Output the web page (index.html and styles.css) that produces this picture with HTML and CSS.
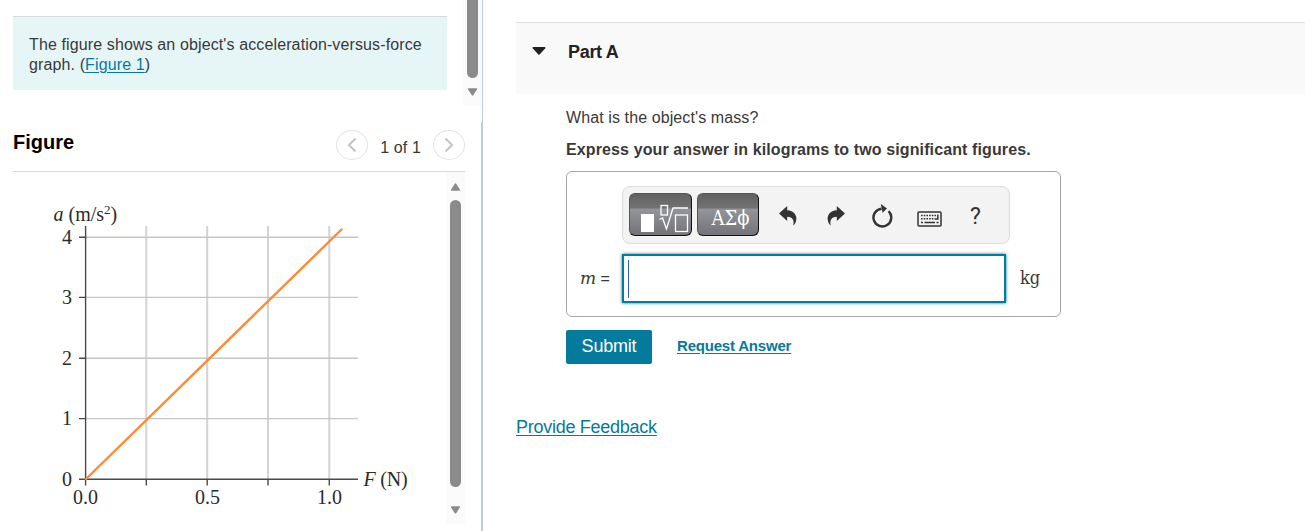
FILE: index.html
```
<!DOCTYPE html>
<html lang="en">
<head>
  <meta charset="UTF-8" />
  <title>Part A</title>
  <link rel="stylesheet" href="styles.css">
</head>

<body>
  <div class="left-pane">
    <div class="intro-row">
      <div class="intro">The figure shows an object's acceleration-versus-force graph. (<a href="#">Figure 1</a>)</div>
      <div class="scrollbar scrollbar-top">
        <div class="thumb"></div>
        <svg class="arrow" viewBox="0 0 12 10"><path d="M1.500 1h9q1 0 .4 1L6.800 8.500q-.8 1-1.600 0L1.100 2q-.6-1 .4-1z" /></svg>
      </div>
    </div>

    <div class="figure-pane">
      <div class="figure-header">
        <h2>Figure</h2>
        <div class="pager">
          <button class="page-btn" aria-label="Previous"><svg viewBox="0 0 12 16"><path d="M9.500 1.500L3 8l6.500 6.500" /></svg></button>
          <span>1 of 1</span>
          <button class="page-btn" aria-label="Next"><svg viewBox="0 0 12 16"><path d="M2.500 1.500L9 8l-6.500 6.500" /></svg></button>
        </div>
      </div>

      <div class="figure-body">
        <svg class="graph" viewBox="13 172 433 352">
          <!-- grid -->
          <path class="grid-v" d="M146.3 226v253M207.2 226v253M268 226v253M329.3 226v253" />
          <path class="grid-h" d="M86 237.2h272M86 297.4h272M86 358.2h272M86 418.6h272" />
          <!-- axes and ticks -->
          <path class="axis" d="M85.6 226v259.5M79 479.3h279" />
          <path class="axis" d="M79 237.2h7M79 297.4h7M79 358.2h7M79 418.6h7" />
          <path class="axis" d="M146.3 479v6.5M207.2 479v6.5M268 479v6.5M329.3 479v6.5" />
          <path class="curve" d="M86 479L341.500 229.500" />
          <text x="53.500" y="220.500"><tspan class="var">a</tspan> (m/s<tspan class="sup" dy="-7">2</tspan><tspan dy="7">)</tspan></text>
          <text x="62" y="243.500">4</text>
          <text x="62" y="304">3</text>
          <text x="62" y="364.500">2</text>
          <text x="62" y="425">1</text>
          <text x="62" y="485.500">0</text>
          <text x="73" y="503.500">0.0</text>
          <text x="195" y="503.500">0.5</text>
          <text x="317" y="503.500">1.0</text>
          <text class="x-label" x="363.500" y="485.500"><tspan class="var">F</tspan> (N)</text>
        </svg>
        <div class="scrollbar scrollbar-figure">
          <svg class="arrow up" viewBox="0 0 12 10"><path d="M1.500 1h9q1 0 .4 1L6.800 8.500q-.8 1-1.600 0L1.100 2q-.6-1 .4-1z" /></svg>
          <div class="thumb"></div>
          <svg class="arrow" viewBox="0 0 12 10"><path d="M1.500 1h9q1 0 .4 1L6.800 8.500q-.8 1-1.600 0L1.100 2q-.6-1 .4-1z" /></svg>
        </div>
      </div>
    </div>
  </div>

  <div class="right-pane">
    <div class="part-header">
      <svg class="caret" viewBox="0 0 14 8"><path d="M1.200 0h11.600q1.200.3.500 1.200L7.600 7.400q-.6.6-1.200 0L.7 1.200Q0 .3 1.200 0z" /></svg>
      <h1>Part A</h1>
    </div>

    <div class="part-body">
      <p class="question">What is the object's mass?</p>
      <p class="instruction">Express your answer in kilograms to two significant figures.</p>

      <div class="answer-box">
        <div class="toolbar">
          <button class="tool-dark tool-math" aria-label="Templates">
            <svg viewBox="0 0 61 41">
              <rect class="solid" x="11" y="20" width="13" height="18" />
              <path d="M29.500 25.500l3-1.500 4 11L43 14H58" />
              <rect x="31" y="11.500" width="6.500" height="9.500" />
              <rect x="45.500" y="21" width="12" height="16.500" />
            </svg>
          </button>
          <button class="tool-dark tool-greek">ΑΣϕ</button>
          <button class="tool tool-undo" aria-label="Undo">
            <svg viewBox="0 0 18 20"><path d="M0 7.500L8.200 0v4.300C15 4.800 18 9.500 17.300 13.500 17 16.500 15.800 18.400 14.200 19.500 15.500 14.500 14 11 8.200 10.700V15z" /></svg>
          </button>
          <button class="tool tool-redo" aria-label="Redo">
            <svg viewBox="0 0 18 20"><path d="M18 7.500L9.800 0v4.300C3 4.800 0 9.500.7 13.500 1 16.500 2.200 18.400 3.800 19.500 2.500 14.500 4 11 9.800 10.700V15z" /></svg>
          </button>
          <button class="tool tool-reset" aria-label="Reset">
            <svg viewBox="0 0 22 24"><path class="ring" d="M17.600 7.200A8.900 8.900 0 1 1 10.500 4.700" /><path d="M9.800 0l6.200 4.600-4.500 4.200z" /></svg>
          </button>
          <button class="tool tool-keyboard" aria-label="Keyboard">
            <svg viewBox="0 0 25 16">
              <rect class="frame" x="1" y="1" width="23" height="14" rx="1" />
              <path class="keys" d="M4 4.500h15M4 7.800h14" />
              <path class="space" d="M4 11.500h2M7.500 11.500h10.500M19.500 11.500h2" />
              <path class="space" d="M20.800 3.500v4.500h-2.800" />
            </svg>
          </button>
          <button class="tool tool-help">?</button>
        </div>
        <div class="answer-row">
          <label><i>m</i> <span class="equals">=</span></label>
          <div class="answer-input"><span class="cursor"></span></div>
          <span class="unit">kg</span>
        </div>
      </div>

      <div class="actions">
        <button class="submit">Submit</button>
        <a class="request" href="#">Request Answer</a>
      </div>
    </div>

    <a class="feedback" href="#">Provide Feedback</a>
  </div>
</body>
</html>
```
FILE: styles.css
```
* {
  box-sizing: border-box;
  margin: 0;
  padding: 0;
}

body {
  display: flex;
  height: 100vh;
  overflow: hidden;
  background-color: white;
  color: #393939;
  font-family: "Liberation Sans", Arial, sans-serif;
  font-size: 16px;
}

a {
  color: #047a9c;
  text-underline-offset: 2px;
}

button {
  border: none;
  background: none;
  font-family: inherit;
  cursor: pointer;
}

svg {
  display: block;
}

/* left side */
.left-pane {
  width: 483px;
  flex-shrink: 0;
}

.intro-row {
  display: flex;
  justify-content: space-between;
  height: 122px;
  padding-left: 13px;
  border-right: 1px solid #b9cede;
}

.intro {
  width: 434px;
  height: 74px;
  margin-top: 16px;
  padding: 18px 16px;
  border-top: 1px solid #d5dcdc;
  background-color: #e6f6f6;
  letter-spacing: 0.12px;
  line-height: 20px;
}

.scrollbar {
  display: flex;
  flex-direction: column;
  align-items: flex-start;
  width: 19px;
  padding-left: 4px;
  background-color: #fbfbfb;
}

.scrollbar-top {
  height: 106px;
}

.thumb {
  width: 11px;
  border-radius: 6px;
  background-color: #8b8b8b;
}

.scrollbar-top .thumb {
  height: 78px;
  margin-bottom: 9px;
  border-radius: 0 0 6px 6px;
}

.arrow {
  width: 11px;
  height: 10px;
  fill: #8b8b8b;
}

.arrow.up {
  transform: rotate(180deg);
}

.figure-pane {
  height: 409px;
  padding-left: 13px;
  padding-right: 16px;
  border-right: 2px solid #b9cede;
}

.figure-header {
  display: flex;
  justify-content: space-between;
  height: 50px;
  border-bottom: 1px solid #d9d9d9;
}

.figure-header h2 {
  margin-top: 8px;
  color: black;
  font-size: 20px;
  line-height: 24px;
}

.pager {
  display: flex;
  gap: 12px;
  padding-top: 8px;
}

.pager span {
  padding-top: 9px;
  letter-spacing: 0.12px;
  line-height: 18px;
}

.page-btn {
  display: flex;
  justify-content: center;
  align-items: center;
  width: 32px;
  height: 30px;
  border: 1px solid #e3e3e3;
  border-radius: 50%;
}

.page-btn svg {
  width: 12px;
  height: 16px;
  fill: none;
  stroke: #c4c4c4;
  stroke-width: 2;
}

.figure-body {
  display: flex;
}

.graph {
  width: 433px;
  height: 352px;
  font-family: "Liberation Serif", "Times New Roman", serif;
  font-size: 20px;
  fill: #2b2b2b;
}

.graph .var {
  font-style: italic;
}

.graph .sup {
  font-size: 13px;
}

.graph .x-label {
  letter-spacing: -0.2px;
}

.grid-v {
  stroke: #d3d3d3;
  stroke-width: 2;
}

.grid-h {
  stroke: #c6c6c6;
  stroke-width: 1.4;
}

.axis {
  fill: none;
  stroke: #4a4a4a;
  stroke-width: 1.4;
}

.curve {
  stroke: #ff8a33;
  stroke-width: 2.4;
  stroke-linecap: round;
}

.scrollbar-figure {
  height: 352px;
  padding-top: 10px;
}

.scrollbar-figure .thumb {
  height: 287px;
  margin-top: 8px;
  margin-bottom: 18px;
}

/* right side */
.right-pane {
  flex: 1;
  padding-top: 22px;
  padding-left: 33px;
}

.part-header {
  display: flex;
  height: 72px;
  padding-left: 16px;
  border-top: 1px solid #dcdcdc;
  background-color: #f9f9f9;
}

.caret {
  width: 14px;
  height: 8px;
  margin-top: 24px;
  fill: #222;
}

.part-header h1 {
  margin-top: 18px;
  margin-left: 22px;
  color: #222;
  font-size: 18px;
  letter-spacing: -0.3px;
  line-height: 22px;
}

.part-body {
  padding-top: 14px;
  padding-left: 50px;
}

.question {
  letter-spacing: 0.1px;
  line-height: 20px;
}

.instruction {
  margin-top: 12px;
  font-weight: bold;
  letter-spacing: 0.115px;
  line-height: 20px;
}

.answer-box {
  width: 495px;
  height: 146px;
  margin-top: 11px;
  padding-top: 14px;
  border: 1px solid #a6a6a6;
  border-radius: 6px;
}

.toolbar {
  display: flex;
  align-items: flex-start;
  width: 388px;
  height: 58px;
  margin-left: 55px;
  padding-top: 6px;
  padding-left: 6px;
  border: 1px solid #dcdcdc;
  border-radius: 8px;
  background-color: #f3f3f3;
}

.tool-dark {
  height: 43px;
  border: 1px solid #111;
  border-top-color: #555;
  border-left-color: #555;
  border-radius: 6px;
  background: linear-gradient(#626262 0, #727272 14px, #94949c 15px, #737378 100%);
  color: white;
}

.tool-math {
  width: 63px;
}

.tool-math svg {
  width: 61px;
  height: 41px;
  fill: none;
  stroke: white;
  stroke-width: 1.3;
}

.tool-math .solid {
  fill: white;
  stroke: none;
}

.tool-greek {
  width: 62px;
  margin-left: 5px;
  padding-top: 6px;
  padding-left: 5px;
  font-family: "DejaVu Serif Condensed", "DejaVu Serif", serif;
  font-size: 20px;
}

.tool {
  color: #333;
}

.tool svg {
  fill: #333;
}

.tool-undo,
.tool-redo {
  margin-top: 13px;
  margin-left: 20px;
}

.tool-undo svg,
.tool-redo svg {
  width: 18px;
  height: 20px;
}

.tool-redo {
  margin-left: 30px;
}

.tool-reset {
  margin-top: 11px;
  margin-left: 26px;
}

.tool-reset svg {
  width: 22px;
  height: 24px;
}

.tool-reset .ring {
  fill: none;
  stroke: #333;
  stroke-width: 2.4;
}

.tool-keyboard {
  margin-top: 18px;
  margin-left: 24px;
}

.tool-keyboard svg {
  width: 25px;
  height: 16px;
  fill: none;
  stroke: #333;
}

.tool-keyboard .frame,
.tool-keyboard .space {
  stroke-width: 1.5;
}

.tool-keyboard .keys {
  stroke-width: 1.5;
  stroke-dasharray: 1.6 1.1;
}

.tool-help {
  margin-top: 10px;
  margin-left: 28px;
  font-family: Roboto, sans-serif;
  font-size: 23px;
  line-height: 27px;
}

.answer-row {
  display: flex;
  height: 48px;
  margin-top: 10px;
}

.answer-row label {
  width: 55px;
  padding-left: 13px;
  font-family: "DejaVu Serif", serif;
  font-size: 17px;
  line-height: 48px;
  white-space: nowrap;
}

.answer-row .equals {
  margin-left: -1px;
  font-family: "Liberation Sans", Arial, sans-serif;
  font-size: 16px;
}

.answer-input {
  width: 384px;
  height: 49px;
  padding-top: 4px;
  padding-left: 4px;
  border: 2px solid #047a9c;
  box-shadow: 0 0 3px #047a9c;
}

.cursor {
  display: block;
  width: 1px;
  height: 38px;
  background-color: #2b5fd0;
}

.unit {
  margin-left: 14px;
  font-family: "DejaVu Serif Condensed", "DejaVu Serif", serif;
  font-size: 18px;
  line-height: 48px;
}

.actions {
  display: flex;
  margin-top: 13px;
}

.submit {
  width: 86px;
  height: 34px;
  padding-bottom: 2px;
  border-radius: 2px;
  background-color: #047a9c;
  color: white;
  font-size: 18px;
  letter-spacing: -0.2px;
  line-height: 30px;
}

.request {
  margin-left: 25px;
  font-size: 15px;
  font-weight: bold;
  letter-spacing: -0.2px;
  line-height: 32px;
}

.feedback {
  display: inline-block;
  margin-top: 52px;
  font-size: 18px;
  letter-spacing: -0.27px;
  line-height: 22px;
}
```
